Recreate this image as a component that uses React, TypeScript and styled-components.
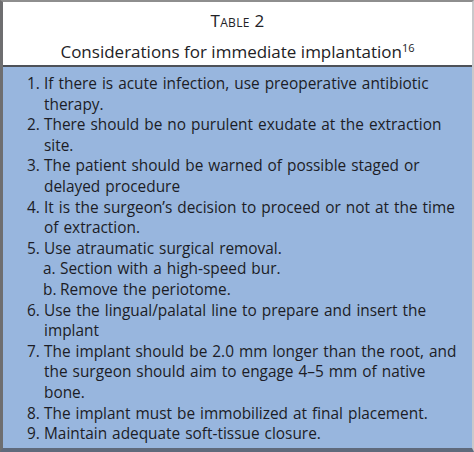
import React from "react";
import styled, { createGlobalStyle } from "styled-components";

const GlobalStyle = createGlobalStyle`
  html, body {
    margin: 0;
    padding: 0;
    background: #ffffff;
  }
  body {
    font-family: "Open Sans", "Noto Sans", sans-serif;
  }
`;

const Frame = styled.div`
  width: 474px;
  height: 452px;
  box-sizing: border-box;
  border-top: 2px solid #8e8e8e;
  border-left: 3px solid #6e6e70;
  border-right: 2px solid #c9c9cb;
  border-bottom: 4px solid #5f6a7c;
  display: flex;
  flex-direction: column;
  overflow: hidden;
`;

const Header = styled.div`
  height: 63px;
  background: #ffffff;
  border-bottom: 2px solid #4d5158;
  display: flex;
  flex-direction: column;
  align-items: center;
  color: #222226;
`;

const Label = styled.div`
  font-size: 17px;
  font-variant: small-caps;
  line-height: 20px;
  margin-top: 9px;
  letter-spacing: 0.3px;
`;

const Title = styled.div`
  font-size: 17px;
  line-height: 22px;
  margin-top: 10px;

  sup {
    font-size: 11px;
    vertical-align: top;
    position: relative;
    top: -4px;
  }
`;

const Body = styled.ol`
  flex: 1;
  margin: 0;
  list-style: none;
  background: #98b6de;
  padding: 7px 8px 0 24px;
  color: #1c1d26;
  font-size: 15.4px;
  line-height: 20.6px;
  word-spacing: 1px;
`;

const Item = styled.li<{ $sub?: boolean }>`
  display: flex;
  padding-left: ${(p) => (p.$sub ? "16px" : "0")};
`;

const Num = styled.span`
  flex: none;
  width: 17px;
`;

const items: { n: string; text: string; sub?: boolean }[] = [
  { n: "1.", text: "If there is acute infection, use preoperative antibiotic therapy." },
  { n: "2.", text: "There should be no purulent exudate at the extraction site." },
  { n: "3.", text: "The patient should be warned of possible staged or delayed procedure" },
  { n: "4.", text: "It is the surgeon\u2019s decision to proceed or not at the time of extraction." },
  { n: "5.", text: "Use atraumatic surgical removal." },
  { n: "a.", text: "Section with a high-speed bur.", sub: true },
  { n: "b.", text: "Remove the periotome.", sub: true },
  { n: "6.", text: "Use the lingual/palatal line to prepare and insert the implant" },
  {
    n: "7.",
    text: "The implant should be 2.0 mm longer than the root, and the surgeon should aim to engage 4\u20135 mm of native bone.",
  },
  { n: "8.", text: "The implant must be immobilized at final placement." },
  { n: "9.", text: "Maintain adequate soft-tissue closure." },
];

export default function App() {
  return (
    <>
      <GlobalStyle />
      <Frame>
        <Header>
          <Label>Table 2</Label>
          <Title>
            Considerations for immediate implantation<sup>16</sup>
          </Title>
        </Header>
        <Body>
          {items.map((it) => (
            <Item key={it.n} $sub={it.sub}>
              <Num>{it.n}</Num>
              <span>{it.text}</span>
            </Item>
          ))}
        </Body>
      </Frame>
    </>
  );
}
